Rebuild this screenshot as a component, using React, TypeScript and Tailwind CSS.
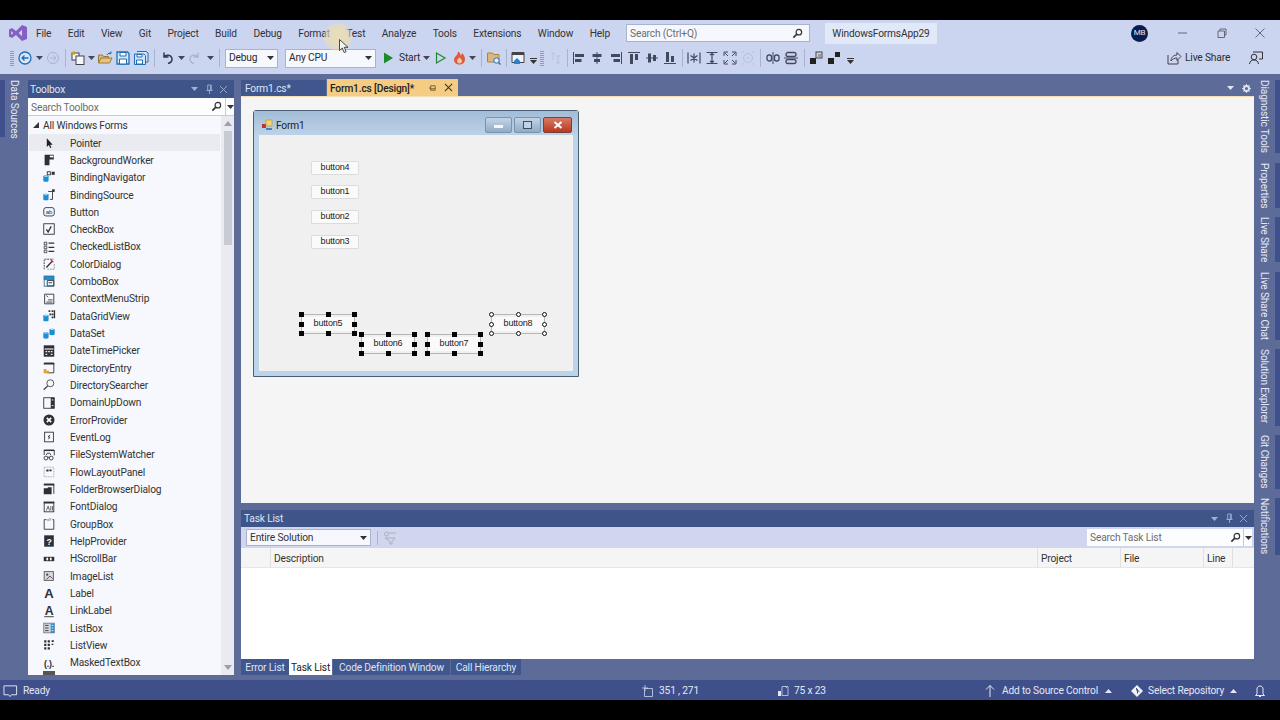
import React from "react";

const D = "#2f2f35";
const B = "#1c8ed6";

function I({ children, c = "w-[16px] h-[16px]" }: { children?: React.ReactNode; c?: string }) {
  return (
    <svg viewBox="0 0 16 16" className={c + " shrink-0"} fill="none">
      {children}
    </svg>
  );
}

const Cyl = ({ x = 2, y = 7 }: { x?: number; y?: number }) => (
  <g>
    <path d={`M${x} ${y}c0-1.3 6-1.3 6 0v5.5c0 1.3-6 1.3-6 0z`} fill={B} />
    <ellipse cx={x + 3} cy={y} rx="2.2" ry=".7" fill="#bfe3f8" />
  </g>
);

const toolboxIcons: Record<string, React.ReactNode> = {
  Pointer: <path d="M5.5 2.5v10l2.3-2.1 1.5 3.4 1.4-.6-1.5-3.3h3z" fill="#1f1f24" />,
  BackgroundWorker: (
    <g>
      <path d="M3 2h10.500v5.500H8.500v6.500H3z" fill={D} />
      <rect x="9" y="3" width="4" height="2" fill="#fff" />
    </g>
  ),
  BindingNavigator: (
    <g>
      <Cyl x={1.500} y={7} />
      <rect x="6" y="2" width="3.500" height="3.500" stroke={D} />
      <rect x="11" y="2" width="3.500" height="3.500" fill={D} />
    </g>
  ),
  BindingSource: (
    <g>
      <Cyl x={1.500} y={7.500} />
      <path d="M7 4h5v9H9" stroke={D} />
      <rect x="11.500" y="1.500" width="3" height="3" fill={D} />
    </g>
  ),
  Button: (
    <g>
      <rect x="2" y="3" width="12" height="9.500" rx="2.500" stroke={D} />
      <text x="8" y="10.500" textAnchor="middle" fontSize="7" fill={D} fontFamily="Liberation Sans">ab</text>
    </g>
  ),
  CheckBox: (
    <g>
      <rect x="2" y="2" width="12" height="12" stroke={D} />
      <path d="M5 8.500l2 3 3.500-6.500" stroke={D} strokeWidth="1.500" />
    </g>
  ),
  CheckedListBox: (
    <g>
      <path d="M2.500 2.500h3v3h-3zM2.500 7h3v3h-3zM2.500 11.500h3v3h-3z" stroke={D} strokeWidth=".9" />
      <path d="M7.500 3.500h6.500M7.500 8.500h6.500M7.500 13h6.500" stroke={D} strokeWidth="1.400" />
    </g>
  ),
  ColorDialog: (
    <g>
      <path d="M2.500 14V2.500H13" stroke={D} strokeDasharray="2 1" />
      <path d="M5 12l6.500-7" stroke={D} strokeWidth="1.600" />
      <path d="M10 3l3 3" stroke="#c33" strokeWidth="1.500" />
      <path d="M6 14h8V8" stroke="#888" strokeDasharray="2 1" />
    </g>
  ),
  ComboBox: (
    <g>
      <rect x="2" y="2" width="12" height="5" fill={B} />
      <rect x="2.500" y="2.500" width="11" height="11.500" stroke="#3f6f8f" />
      <path d="M6 7.500v6h7.500V7.500zM7.500 10h4" stroke={D} />
    </g>
  ),
  ContextMenuStrip: (
    <g>
      <path d="M3 2.500h10.500v11H3z" stroke={D} />
      <path d="M5 4l2 2M7 9h5M5 11.500h7" stroke={D} />
    </g>
  ),
  DataGridView: (
    <g>
      <Cyl x={1.500} y={7.500} />
      <path d="M7.500 1.500h2v2h-2zM11 1.500h2v2h-2zM11 5h2v2h-2zM8.500 5h2v2h-2zM11 8.500h2v2h-2zM13.500 1.500h1.500v9h-1.500z" fill={D} />
    </g>
  ),
  DataSet: (
    <g>
      <Cyl x={1.500} y={8} />
      <Cyl x={8.500} y={4} />
    </g>
  ),
  DateTimePicker: (
    <g>
      <rect x="2" y="1.500" width="12" height="13" fill={D} />
      <rect x="3" y="5" width="10" height="1.500" fill="#ddd" />
      <path d="M4 8h2v1.500H4zM7 8h2v1.500H7zM10 8h2v1.500h-2zM4 11h2v1.500H4zM10 11h2v1.500h-2z" fill="#eee" />
    </g>
  ),
  DirectoryEntry: (
    <g>
      <path d="M2.500 2.500h11v11H6" stroke={D} />
      <rect x="2" y="2" width="12" height="2" fill={D} />
      <path d="M2 9h3v2h3v3H2z" fill="#e0a030" />
    </g>
  ),
  DirectorySearcher: (
    <g>
      <circle cx="9.500" cy="6" r="4" stroke="#444" />
      <path d="M6.500 9l-4.500 4.500" stroke="#444" strokeWidth="1.500" />
    </g>
  ),
  DomainUpDown: (
    <g>
      <rect x="2" y="2" width="12" height="12" stroke={D} />
      <path d="M10 2h4v12h-4z" fill={D} />
      <path d="M11 4.500h2M11 11h2" stroke="#fff" />
    </g>
  ),
  ErrorProvider: (
    <g>
      <circle cx="8" cy="8" r="6.300" fill={D} />
      <path d="M5.500 5.500l5 5M10.500 5.500l-5 5" stroke="#fff" strokeWidth="1.900" />
    </g>
  ),
  EventLog: (
    <g>
      <rect x="3" y="2.500" width="10" height="11" stroke={D} />
      <path d="M9 5.500L7 8h2l-1.500 2.500" stroke={D} />
    </g>
  ),
  FileSystemWatcher: (
    <g>
      <path d="M3 2.500h11v6M2.500 8V3" stroke={D} />
      <rect x="2" y="2" width="12" height="1.500" fill={D} />
      <circle cx="4.500" cy="11.500" r="2.200" stroke={D} />
      <circle cx="10.500" cy="11.500" r="2.200" stroke={D} />
      <path d="M6.500 10.500h2M5 8l1-2h3l1 2" stroke={D} />
    </g>
  ),
  FlowLayoutPanel: (
    <g>
      <rect x="2.500" y="2.500" width="11" height="11" stroke="#aaa" strokeDasharray="2 1" />
      <path d="M5 5h2.500v2.500H5zM8.500 5H11v2H8.500z" fill={D} />
    </g>
  ),
  FolderBrowserDialog: (
    <g>
      <path d="M2.500 2.500h11v11" stroke={D} />
      <rect x="2" y="2" width="12" height="2" fill={D} />
      <path d="M2 7h4l1-1h4v8H2z" fill={D} />
    </g>
  ),
  FontDialog: (
    <g>
      <rect x="2.500" y="2.500" width="11" height="11" stroke={D} />
      <rect x="2" y="2" width="12" height="2" fill={D} />
      <path d="M5 12l2-5 1.500 5M10 7v5M12 7v5" stroke="#555" />
    </g>
  ),
  GroupBox: (
    <g>
      <path d="M5 3H2.500v11h11V3H12" stroke={D} />
      <text x="8.200" y="5" textAnchor="middle" fontSize="4.500" fill={D} fontFamily="Liberation Sans">xY</text>
    </g>
  ),
  HelpProvider: (
    <g>
      <rect x="2.500" y="1.500" width="11" height="13" fill={D} />
      <text x="8" y="12" textAnchor="middle" fontSize="10" fontWeight="bold" fill="#fff" fontFamily="Liberation Sans">?</text>
    </g>
  ),
  HScrollBar: (
    <g>
      <rect x="2" y="5.500" width="12" height="5" fill={D} />
      <rect x="5" y="6.500" width="2" height="3" fill="#fff" />
      <rect x="9" y="6.500" width="2" height="3" fill="#fff" />
    </g>
  ),
  ImageList: (
    <g>
      <rect x="2.500" y="3" width="10.500" height="10" fill="#d9d9d9" stroke="#555" />
      <circle cx="6" cy="6.500" r="1.300" fill="#444" />
      <path d="M5 12l4-4 3 3" stroke="#444" />
    </g>
  ),
  Label: <text x="8" y="14" textAnchor="middle" fontSize="15" fontWeight="bold" fill={D} fontFamily="Liberation Sans">A</text>,
  LinkLabel: (
    <g>
      <text x="8" y="13" textAnchor="middle" fontSize="14" fontWeight="bold" fill={D} fontFamily="Liberation Sans">A</text>
      <path d="M2.500 14.500h11" stroke={D} />
    </g>
  ),
  ListBox: (
    <g>
      <rect x="2" y="2.500" width="12" height="11" fill="#cfd6dc" stroke="#778" />
      <path d="M3.500 5h4M3.500 8h4M3.500 11h4" stroke={D} />
      <rect x="10" y="3" width="4" height="10.500" fill={B} />
      <path d="M11 5h2M11 8h2M11 11h2" stroke="#fff" />
    </g>
  ),
  ListView: <path d="M2.500 2.500h2.500v2.500H2.500zM6.500 2.500H9v2.500H6.500zM11 2.500h2.500v2H11zM2.500 6.500h2.500v2.500H2.500zM6.500 6.500H9v2.500H6.500zM11 6.500h2v1.500h-2zM2.500 10.500h2.500v2.500H2.500zM6.500 10.500H9v2.500H6.500z" fill={D} />,
  MaskedTextBox: <text x="8" y="12" textAnchor="middle" fontSize="10" fontWeight="bold" fill={D} fontFamily="Liberation Sans">(.).</text>,
};

const tools = Object.keys(toolboxIcons);

function Caret({ c = "#333" }: { c?: string }) {
  return (
    <svg viewBox="0 0 7 4" className="w-[7px] h-[4px] shrink-0">
      <path d="M0 0h7L3.500 4z" fill={c} />
    </svg>
  );
}

function Box({ w, children }: { w: string; children?: React.ReactNode }) {
  return <div className={w + " h-[20px] flex items-center justify-center shrink-0"}>{children}</div>;
}

const Icon18 = ({ children }: { children: React.ReactNode }) => (
  <Box w="w-[18px]">
    <I>{children}</I>
  </Box>
);

const Dd = ({ w = "w-[10px]" }: { w?: string }) => (
  <Box w={w}>
    <Caret c="#44475a" />
  </Box>
);

const Sep = ({ w = "w-[6px]" }: { w?: string }) => (
  <Box w={w}>
    <div className="w-px h-[18px] bg-[#a9b3cf]" />
  </Box>
);

const Grip = () => (
  <Box w="w-[6px]">
    <div className="w-[4px] h-[16px] bg-[repeating-linear-gradient(0deg,#8f9ab8_0,#8f9ab8_1px,transparent_1px,transparent_2px)]" />
  </Box>
);

function Combo({ w, label }: { w: string; label: string }) {
  return (
    <div className={w + " h-[19px] bg-[#f6f8fd] border border-[#a9b3cf] flex items-center justify-between pl-[3px] pr-[3px] shrink-0 text-[10.2px] text-[#2a2a2a]"}>
      <span>{label}</span>
      <Caret c="#333" />
    </div>
  );
}

const alignStroke = "#44485c";

function Toolbar() {
  return (
    <div className="h-[28px] pb-[4px] flex items-center">
      <div className="w-[9px] shrink-0" />
      <Grip />
      <div className="w-px shrink-0" />
      <Icon18>
        <circle cx="8" cy="8" r="6" fill="#d9e6f8" stroke="#1f6fb8" strokeWidth="1.300" />
        <path d="M11.500 8H5M7.500 5.500L5 8l2.500 2.500" stroke="#1f6fb8" strokeWidth="1.300" />
      </Icon18>
      <Dd />
      <Icon18>
        <circle cx="8" cy="8" r="5.500" stroke="#a9b3cf" />
        <path d="M5 8h6M8.500 5.500L11 8l-2.500 2.500" stroke="#a9b3cf" />
      </Icon18>
      <Sep />
      <div className="w-px shrink-0" />
      <Icon18>
        <rect x="2" y="3" width="7" height="7" fill="#f4f6fb" stroke="#444" />
        <rect x="6" y="6" width="8" height="8.500" fill="#f4f6fb" stroke="#444" />
        <path d="M4 1v4M2 3h4" stroke="#d9a000" strokeWidth="1.300" />
      </Icon18>
      <Dd w="w-[9px]" />
      <Icon18>
        <path d="M1.500 13V5h4l1 1.500h5v2" fill="#dcb67a" stroke="#9a7b3c" />
        <path d="M1.500 13l2.500-5h11l-2.500 5z" fill="#e8c27e" stroke="#9a7b3c" />
        <path d="M10 5c1-2 3-2.500 4-1.500M14 1.500v2.200h-2.200" stroke="#1f6fb8" />
      </Icon18>
      <Icon18>
        <path d="M2 2h10.500L14 3.500V14H2z" fill="#d5e5f7" stroke="#1f6fb8" strokeWidth="1.300" />
        <path d="M5 2.500h6v3.500H5zM4.500 9h7v5h-7z" fill="#fff" stroke="#1f6fb8" />
      </Icon18>
      <Icon18>
        <path d="M4 1.500h9L15 3v9h-2M1.500 4h9.500L12.500 5.500v9h-11z" fill="#d5e5f7" stroke="#1f6fb8" />
        <path d="M4 4.500h5v2.500H4zM3.500 10h6v4h-6z" fill="#fff" stroke="#1f6fb8" />
      </Icon18>
      <Sep w="w-[8px]" />
      <Icon18>
        <path d="M5 2.500v4.500h4.500M5 7c1.500-2.500 7.500-3 8 2 .2 2.500-2 4-4 4.500" stroke="#33384a" strokeWidth="1.500" />
      </Icon18>
      <Dd />
      <Icon18>
        <path d="M11 2.500v4.500H6.500M11 7C9.500 4.500 3.500 4 3 9c-.2 2.500 2 4 4 4.500" stroke="#aab3cc" strokeWidth="1.300" />
      </Icon18>
      <Dd w="w-[13px]" />
      <Sep w="w-[5px]" />
      <div className="w-[3px] shrink-0" />
      <Combo w="w-[53px]" label="Debug" />
      <div className="w-[7px] shrink-0" />
      <Combo w="w-[91px]" label="Any CPU" />
      <div className="w-[3px] shrink-0" />
      <Icon18>
        <path d="M4 2.500l9 5.500-9 5.500z" fill="#1f8a2c" />
      </Icon18>
      <div className="w-[2px] shrink-0" />
      <span className="w-[22px] shrink-0 text-[10.2px] text-[#2a2a2a]">Start</span>
      <Dd />
      <Icon18>
        <path d="M4.500 3l8.500 5-8.500 5z" stroke="#1f8a2c" strokeWidth="1.200" />
      </Icon18>
      <div className="w-px shrink-0" />
      <Icon18>
        <path d="M3 10c0-4 4-4 4-8.500 2 1 2.500 2.500 2.500 4 1-.5 1.500-1.500 1.500-2.500 2 2 3 4 3 6.500 0 3-2.500 5-5.500 5S3 12.500 3 10z" fill="#e05a3a" />
        <path d="M6 10.500c0-1.500 3-3 3-3 .5 1.500 2 2 2 3.500s-1 2.500-2.500 2.500S6 12 6 10.500z" fill="#f7c3a8" />
      </Icon18>
      <Dd w="w-[9px]" />
      <Sep w="w-[8px]" />
      <Icon18>
        <path d="M1.500 3h5l1 1.500h5.500V12H1.500z" fill="#dcb67a" stroke="#a98640" />
        <circle cx="10.500" cy="10.500" r="2.700" fill="#e4eefb" stroke="#1f6fb8" />
        <path d="M12.500 12.500l2 2" stroke="#1f6fb8" strokeWidth="1.300" />
      </Icon18>
      <Sep />
      <Icon18>
        <path d="M2 2.500h12v10H2z" stroke="#444" fill="#eef2fb" />
        <rect x="2" y="2.500" width="12" height="2.500" fill="#444" />
        <path d="M4 11l3-3 3 3v3H4z" fill="#2a7fd0" />
      </Icon18>
      <div className="w-px shrink-0" />
      <Box w="w-[10px]">
        <div className="w-[7px] flex flex-col items-center gap-px mt-[6px]">
          <div className="w-[7px] h-px bg-[#333]" />
          <Caret />
        </div>
      </Box>
      <div className="w-px shrink-0" />
      <Grip />
      <div className="w-px shrink-0" />
      <Icon18>
        <path d="M4 3h4M6 3v7M11 6v7M9 13h4" stroke="#b9c0d6" />
        <path d="M9 6h4" stroke="#b9c0d6" />
      </Icon18>
      <Sep />
      <Icon18>
        <path d="M2.500 2v12" stroke={alignStroke} />
        <path d="M4 4h9v3H4zM4 9h6.500v3H4z" fill={alignStroke} />
      </Icon18>
      <Icon18>
        <path d="M8 2v12" stroke={alignStroke} />
        <path d="M3.500 4h9v3h-9zM5 9h6v3H5z" fill={alignStroke} />
      </Icon18>
      <div className="w-px shrink-0" />
      <Icon18>
        <path d="M13.500 2v12" stroke={alignStroke} />
        <path d="M3 4h9v3H3zM5.500 9H12v3H5.500z" fill={alignStroke} />
      </Icon18>
      <Icon18>
        <path d="M2 2.500h12" stroke={alignStroke} />
        <path d="M4 4h3v10H4zM9 4h3v6H9z" fill={alignStroke} />
      </Icon18>
      <Icon18>
        <path d="M2 8h12" stroke={alignStroke} />
        <path d="M4 3.500h3v9H4zM9 5h3v6H9z" fill={alignStroke} />
      </Icon18>
      <Icon18>
        <path d="M2 13.500h12" stroke={alignStroke} />
        <path d="M4 2h3v10H4zM9 6h3v6H9z" fill={alignStroke} />
      </Icon18>
      <Sep />
      <Icon18>
        <path d="M2 2.500v11M14 2.500v11M8 3.500v9M4.500 5.500l7 5M11.500 5.500l-7 5" stroke={alignStroke} strokeWidth="1.200" />
      </Icon18>
      <Icon18>
        <path d="M2.500 2.500h11M2.500 13.500h11M8 4v8M6 5l2-1.500L10 5M6 11l2 1.500 2-1.500" stroke={alignStroke} strokeWidth="1.200" />
      </Icon18>
      <Icon18>
        <path d="M2 6V2h4M10 2h4v4M14 10v4h-4M6 14H2v-4M3 3l3 3M13 3l-3 3M13 13l-3-3M3 13l3-3" stroke={alignStroke} />
      </Icon18>
      <Icon18>
        <circle cx="8" cy="8" r="4.500" stroke="#b9c0d6" />
        <path d="M2 2h2M12 2h2M2 14h2M12 14h2M6.500 8h3" stroke="#b9c0d6" />
      </Icon18>
      <Sep />
      <div className="w-px shrink-0" />
      <Icon18>
        <rect x="2" y="5" width="4.500" height="6" rx="2" stroke={alignStroke} strokeWidth="1.300" />
        <rect x="9.500" y="5" width="4.500" height="6" rx="2" stroke={alignStroke} strokeWidth="1.300" />
        <path d="M8 2v12" stroke={alignStroke} />
      </Icon18>
      <Icon18>
        <rect x="3" y="2.500" width="10" height="4" rx="2" stroke={alignStroke} strokeWidth="1.300" />
        <rect x="3" y="9.500" width="10" height="4" rx="2" stroke={alignStroke} strokeWidth="1.300" />
        <path d="M1 8h14" stroke={alignStroke} />
      </Icon18>
      <div className="w-px shrink-0" />
      <Sep />
      <Icon18>
        <rect x="2" y="8" width="6" height="6" fill="#222" />
        <rect x="8" y="2" width="6" height="6" fill="none" stroke="#444" />
        <rect x="10" y="4" width="3" height="3" fill="#999" />
      </Icon18>
      <Icon18>
        <rect x="2" y="8" width="6" height="6" fill="#222" />
        <rect x="9" y="2" width="5" height="5" fill="#222" />
      </Icon18>
      <div className="w-[2px] shrink-0" />
      <Box w="w-[10px]">
        <div className="w-[7px] flex flex-col items-center gap-px mt-[6px]">
          <div className="w-[7px] h-px bg-[#333]" />
          <Caret />
        </div>
      </Box>
      <div className="ml-auto flex items-center">
        <I>
          <path d="M2 5v9h10V10" stroke="#444" />
          <path d="M5 11c0-4 3-6 6-6V2.500l4 4-4 4V8c-2.500 0-4.500 1-6 3z" stroke="#444" />
        </I>
        <span className="ml-[3px] w-[46px] whitespace-nowrap text-[10.2px] text-[#2a2a2a]">Live Share</span>
        <div className="w-[17px]" />
        <I>
          <circle cx="6" cy="7" r="2.800" stroke="#333" />
          <path d="M1.500 14c.5-3 2-4 4.500-4s4 1 4.500 4" stroke="#333" />
          <path d="M5 2h9.500v7H11" stroke="#333" />
        </I>
        <div className="w-[16px]" />
      </div>
    </div>
  );
}

const menus = ["File", "Edit", "View", "Git", "Project", "Build", "Debug", "Format", "Test", "Analyze", "Tools", "Extensions", "Window", "Help"];

function MenuBar() {
  return (
    <div className="h-[26px] flex items-center">
      <div className="w-[9px] shrink-0" />
      <svg viewBox="0 0 18 16" className="w-[18px] h-[16px] shrink-0">
        <path fillRule="evenodd" d="M13 0l5 2v12l-5 2-6-6-4 3-3-1.500v-7L3 3l4 3zM13 4.800L9.700 8l3.300 3.200zM2.200 6v4L4.300 8z" fill="#865fc5" />
      </svg>
      <div className="w-[9px] shrink-0" />
      <div className="w-[574px] shrink-0 pt-[2px] flex justify-between text-[10.2px] text-[#333]">
        {menus.map((m) => (
          <span key={m}>{m}</span>
        ))}
      </div>
      <div className="w-[16px] shrink-0" />
      <div className="w-[184px] h-[18px] bg-[#f6f8fd] border border-[#a9b3cf] flex items-center justify-between pl-[3px] pr-[6px] pt-px text-[10.2px] text-[#6d6d6d] shrink-0">
        <span>Search (Ctrl+Q)</span>
        <Mag />
      </div>
      <div className="w-[15px] shrink-0" />
      <div className="w-[112px] h-[21px] bg-[#e1e8f8] flex items-center justify-center whitespace-nowrap pt-px text-[10.2px] text-[#333] shrink-0">WindowsFormsApp29</div>
      <div className="ml-auto flex items-center">
        <div className="w-[17px] h-[17px] rounded-full bg-[#0a1d4f] text-[#dfe6f7] text-[8px] flex items-center justify-center">MB</div>
        <div className="w-[29px]" />
        <svg viewBox="0 0 12 12" className="w-[12px] h-[12px]"><path d="M1 6h9" stroke="#667" /></svg>
        <div className="w-[27px]" />
        <svg viewBox="0 0 12 12" className="w-[12px] h-[12px]"><path d="M2 4h6.500v6.500H2zM4 4V2h6v6H8.500" stroke="#667" fill="none" /></svg>
        <div className="w-[26px]" />
        <svg viewBox="0 0 12 12" className="w-[12px] h-[12px]"><path d="M1.500 1.500l9 9M10.500 1.500l-9 9" stroke="#667" /></svg>
        <div className="w-[14px]" />
      </div>
    </div>
  );
}

function Mag({ c = "#333" }: { c?: string }) {
  return (
    <svg viewBox="0 0 12 12" className="w-[11px] h-[11px] shrink-0">
      <circle cx="7.500" cy="4.500" r="3" fill="none" stroke={c} strokeWidth="1.300" />
      <path d="M5 7l-3.500 3.500" stroke={c} strokeWidth="1.800" />
    </svg>
  );
}

function PanelIcons({ c = "#9fb0d6" }: { c?: string }) {
  return (
    <div className="flex items-center">
      <Caret c={c} />
      <div className="w-[7px]" />
      <svg viewBox="0 0 10 12" className="w-[9px] h-[11px]">
        <path d="M3 1h4v6H3zM1.500 7h7M5 7v4M6 1.500v5" stroke={c} fill="none" />
      </svg>
      <div className="w-[5px]" />
      <svg viewBox="0 0 10 10" className="w-[9px] h-[9px]">
        <path d="M1 1l8 8M9 1l-8 8" stroke={c} />
      </svg>
    </div>
  );
}

function Toolbox() {
  return (
    <div className="w-[206px] h-[595px] flex flex-col shrink-0 bg-[#f6f8fd]">
      <div className="h-[18px] bg-[#3f5488] flex items-center justify-between pl-[2px] pr-[6px] text-[10.2px] text-[#dfe5f5] shrink-0">
        <span className="pt-[2px]">Toolbox</span>
        <PanelIcons />
      </div>
      <div className="h-[18px] flex bg-[#fcfdff] border-b border-[#c4cbe0] shrink-0">
        <div className="flex-1 flex items-center justify-between pl-[3px] pr-[3px] text-[10.2px] text-[#6d6d6d]">
          <span className="pt-[2px]">Search Toolbox</span>
          <Mag />
        </div>
        <div className="w-[9px] border-l border-[#c4cbe0] flex items-center justify-center">
          <Caret />
        </div>
      </div>
      <div className="flex-1 flex min-h-0 overflow-hidden">
        <div className="w-[193px] shrink-0 overflow-hidden">
          <div className="h-[18px] flex items-center text-[10.2px] text-[#333]">
            <svg viewBox="0 0 6 6" className="w-[6px] h-[6px] ml-[5px]"><path d="M6 0v6H0z" fill="#333" /></svg>
            <span className="ml-[4px] pt-[2px]">All Windows Forms</span>
          </div>
          {tools.map((t) => (
            <div key={t} className={"h-[17.33px] flex items-center text-[10.2px] text-[#333] ml-[1px] mr-[1px] " + (t === "Pointer" ? "bg-[#e9ebf1]" : "")}>
              <div className="w-[13px] shrink-0" />
              <I c="w-[14px] h-[14px]">{toolboxIcons[t]}</I>
              <span className="ml-[14px] pt-px">{t}</span>
            </div>
          ))}
          <div className="h-[17px] flex items-start">
            <div className="ml-[15px] w-[12px] h-[4px] bg-[#555]" />
          </div>
        </div>
        <div className="w-[13px] shrink-0 bg-[#e9ebf0] flex flex-col items-center pt-[5px] pb-[5px]">
          <svg viewBox="0 0 8 5" className="w-[8px] h-[5px] shrink-0"><path d="M0 5h8L4 0z" fill="#9b9fae" /></svg>
          <div className="w-[8px] h-[114px] mt-[5px] bg-[#c8cbd4]" />
          <div className="flex-1" />
          <svg viewBox="0 0 8 5" className="w-[8px] h-[5px] shrink-0"><path d="M0 0h8L4 5z" fill="#9b9fae" /></svg>
        </div>
      </div>
    </div>
  );
}

function Btn({ x, y, label }: { x: string; y: string; label: string }) {
  return (
    <div className={"absolute " + x + " " + y + " w-[48px] h-[14px] bg-[#fafafa] border border-[#dcdcdc] rounded-[1px] flex items-center justify-center text-[9px] text-[#222] font-['Liberation_Sans',sans-serif]"}>
      {label}
    </div>
  );
}

function SelBtn({ x, y, label, hollow = false }: { x: string; y: string; label: string; hollow?: boolean }) {
  const pts: [string, string][] = [
    ["left-0", "top-0"],
    ["left-[26.500px]", "top-0"],
    ["left-[53px]", "top-0"],
    ["left-0", "top-[9.500px]"],
    ["left-[53px]", "top-[9.500px]"],
    ["left-0", "top-[19px]"],
    ["left-[26.500px]", "top-[19px]"],
    ["left-[53px]", "top-[19px]"],
  ];
  return (
    <div className={"absolute " + x + " " + y + " w-[58px] h-[24px]"}>
      <div className="absolute left-[2px] top-[2px] w-[54px] h-[20px] border border-[#b5b5b5]" />
      <div className="absolute left-[3px] top-[5px] w-[52px] h-[14px] bg-[#fafafa] flex items-center justify-center text-[9px] text-[#222] font-['Liberation_Sans',sans-serif]">{label}</div>
      {pts.map(([l, t], i) => (
        <div key={i} className={"absolute w-[5px] h-[5px] " + l + " " + t + " " + (hollow ? "bg-white border border-[#111] rounded-full" : "bg-[#050505]")} />
      ))}
    </div>
  );
}

function FormWindow() {
  return (
    <div className="w-[326px] h-[267px] ml-[12px] mt-[13px] bg-[#bcd3e9] border border-[#48606f] rounded-t-[3px] flex flex-col shrink-0">
      <div className="h-[24px] shrink-0 flex items-center bg-[linear-gradient(180deg,#a3bcd6,#bcd2e8)] pl-[7px] pr-[6px] pt-[3px]">
        <svg viewBox="0 0 12 12" className="w-[12px] h-[12px]">
          <rect x="1" y="5" width="4" height="4" fill="#b6343a" />
          <rect x="5" y="1" width="6" height="6" fill="#f4d56a" stroke="#b9922e" strokeWidth=".6" />
          <rect x="5" y="9" width="6" height="2" fill="#4a7fc0" />
        </svg>
        <span className="ml-[3px] pt-[2px] text-[10.2px] text-[#222]">Form1</span>
        <div className="ml-auto flex gap-[2px]">
          <div className="w-[27px] h-[16px] border border-[#7a93ad] rounded-[2px] bg-[linear-gradient(180deg,#c4d4e6,#92abc6)] flex items-center justify-center">
            <div className="w-[9px] h-[3px] bg-[#f4f6f8] mt-[3px]" />
          </div>
          <div className="w-[27px] h-[16px] border border-[#7a93ad] rounded-[2px] bg-[linear-gradient(180deg,#c4d4e6,#92abc6)] flex items-center justify-center">
            <div className="w-[9px] h-[8px] border border-[#3d4e63] bg-[#c0d2e5]" />
          </div>
          <div className="w-[29px] h-[16px] border border-[#7a4035] rounded-[2px] bg-[linear-gradient(180deg,#d77b66,#b8381f)] flex items-center justify-center">
            <svg viewBox="0 0 10 8" className="w-[10px] h-[8px]"><path d="M1.500 1l7 6M8.500 1l-7 6" stroke="#fff" strokeWidth="2" /></svg>
          </div>
        </div>
      </div>
      <div className="flex-1 mx-[5px] mb-[5px] bg-[#f0f0f0] relative">
        <Btn x="left-[52px]" y="top-[26px]" label="button4" />
        <Btn x="left-[52px]" y="top-[50px]" label="button1" />
        <Btn x="left-[52px]" y="top-[75px]" label="button2" />
        <Btn x="left-[52px]" y="top-[100px]" label="button3" />
        <SelBtn x="left-[40px]" y="top-[177px]" label="button5" />
        <SelBtn x="left-[100px]" y="top-[197px]" label="button6" />
        <SelBtn x="left-[166px]" y="top-[197px]" label="button7" />
        <SelBtn x="left-[230px]" y="top-[177px]" label="button8" hollow />
      </div>
    </div>
  );
}

function Doc() {
  return (
    <div className="h-[423px] flex flex-col shrink-0">
      <div className="h-[16px] flex items-stretch shrink-0 text-[10.2px] whitespace-nowrap">
        <div className="w-[85px] bg-[#40568d] text-[#dfe5f5] pl-[4px] pt-[2px] flex items-center">Form1.cs*</div>
        <div className="w-[131px] ml-px -mt-px h-[17px] bg-[#f5cc84] text-[#222] pl-[3px] pr-[5px] flex items-center justify-between font-medium">
          <span className="pt-[2px]">Form1.cs [Design]*</span>
          <span className="flex items-center gap-[7px]">
            <svg viewBox="0 0 10 8" className="w-[9px] h-[8px]"><path d="M1 4h2M3 1.500h5v5H3zM3 4.800h5" stroke="#6c5a30" fill="none" /></svg>
            <svg viewBox="0 0 10 10" className="w-[9px] h-[9px]"><path d="M1 1l8 8M9 1l-8 8" stroke="#40351c" strokeWidth="1.200" /></svg>
          </span>
        </div>
        <div className="ml-auto flex items-center pr-[3px]">
          <Caret c="#e1e6f5" />
          <div className="w-[8px]" />
          <svg viewBox="0 0 10 10" className="w-[9px] h-[9px]">
            <circle cx="5" cy="5" r="2.800" fill="none" stroke="#e1e6f5" strokeWidth="2" />
            <path d="M5 0v2M5 8v2M0 5h2M8 5h2M1.500 1.500l1.200 1.200M7.300 7.300l1.200 1.200M8.500 1.500L7.300 2.700M2.700 7.300L1.500 8.500" stroke="#e1e6f5" />
          </svg>
        </div>
      </div>
      <div className="flex-1 bg-[#f5f5f5] border-t border-[#f4dcb4] min-h-0">
        <FormWindow />
      </div>
    </div>
  );
}

function TaskList() {
  const cols: [string, string][] = [
    ["w-[30px]", ""],
    ["w-[767px]", "Description"],
    ["w-[83px]", "Project"],
    ["w-[83px]", "File"],
    ["w-[29px]", "Line"],
  ];
  return (
    <div className="h-[165px] flex flex-col shrink-0 mt-[7px]">
      <div className="h-[17px] bg-[#3f5488] flex items-center justify-between pl-[3px] pr-[6px] text-[10.2px] text-[#dfe5f5] shrink-0">
        <span>Task List</span>
        <PanelIcons />
      </div>
      <div className="h-[21px] bg-[#cfd6ee] flex items-center pl-[5px] pr-[2px] shrink-0">
        <div className="w-[125px] h-[17px] bg-[#f6f8fd] border border-[#a9b3cf] flex items-center justify-between pl-[3px] pr-[3px] text-[10.2px] text-[#333]">
          <span>Entire Solution</span>
          <Caret />
        </div>
        <div className="w-px h-[14px] ml-[6px] bg-[#a9b3cf]" />
        <svg viewBox="0 0 14 14" className="w-[14px] h-[14px] ml-[5px]">
          <circle cx="3.500" cy="3" r="2" fill="none" stroke="#a9b0bf" />
          <path d="M2 7h10L9 10.500V13H7v-2.500z" fill="none" stroke="#a9b0bf" />
          <path d="M6 2h7" stroke="#a9b0bf" />
        </svg>
        <div className="ml-auto w-[165px] h-[17px] bg-[#fcfdff] flex">
          <div className="flex-1 flex items-center justify-between pl-[3px] pr-[2px] text-[10.2px] text-[#6d6d6d]">
            <span>Search Task List</span>
            <Mag />
          </div>
          <div className="w-[9px] border-l border-[#c4cbe0] flex items-center justify-center">
            <Caret />
          </div>
        </div>
      </div>
      <div className="h-[20px] bg-[#f5f5f5] flex border-b border-[#e6e6e6] text-[10.2px] text-[#333] shrink-0">
        {cols.map(([w, l], i) => (
          <div key={i} className={w + " shrink-0 border-r border-[#e0e0e0] pl-[3px] pt-[2px] flex items-center"}>
            {l}
          </div>
        ))}
      </div>
      <div className="flex-1 bg-white min-h-0" />
      <div className="h-[16px] flex bg-[#5d6b99] text-[10.2px] whitespace-nowrap shrink-0">
        <div className="w-[48px] bg-[#40568d] text-[#dfe5f5] pt-[2px] flex items-center justify-center">Error List</div>
        <div className="w-[43px] bg-white text-[#222] pt-[2px] flex items-center justify-center">Task List</div>
        <div className="w-[119px] bg-[#40568d] text-[#dfe5f5] pt-[2px] flex items-center justify-center border-x border-[#5d6b99]">Code Definition Window</div>
        <div className="w-[70px] bg-[#40568d] text-[#dfe5f5] pt-[2px] flex items-center justify-center">Call Hierarchy</div>
      </div>
    </div>
  );
}

function RailTab({ h, label, side, gap }: { h: string; label: string; side: "l" | "r"; gap: string }) {
  const strip = <div className="w-[5px] bg-[#40508d] shrink-0" />;
  return (
    <div className={h + " " + gap + " flex shrink-0"}>
      {side === "l" && strip}
      <div className={"flex-1 flex justify-center " + (side === "l" ? "pr-[5px]" : "pr-px")}>
        <span className="[writing-mode:vertical-rl] whitespace-nowrap text-[10.2px] text-[#e4e8f6] leading-none">{label}</span>
      </div>
      {side === "r" && strip}
    </div>
  );
}

function Status() {
  return (
    <div className="h-[20px] pt-px bg-[#3f4f8a] flex items-center text-[10.2px] text-[#e4e8f6] whitespace-nowrap shrink-0">
      <svg viewBox="0 0 16 14" className="w-[15px] h-[14px] ml-[3px] shrink-0">
        <path d="M1 1.500h13.500v9.500H9l-1.500 2L6 11H1z" fill="none" stroke="#e4e8f6" />
      </svg>
      <span className="ml-[5px] w-[619px] shrink-0">Ready</span>
      <svg viewBox="0 0 12 12" className="w-[12px] h-[12px] shrink-0">
        <path d="M2.500 3.500h8v8h-8zM3 0v6M0 3h6" stroke="#cdd5ee" fill="none" strokeWidth=".8" />
      </svg>
      <span className="ml-[5px] w-[118px] shrink-0">351 , 271</span>
      <svg viewBox="0 0 12 12" className="w-[12px] h-[12px] shrink-0">
        <path d="M5 1.500h6v9H5zM8 1l2 2" stroke="#cdd5ee" fill="none" strokeWidth=".8" />
        <path d="M1 6h3v5H1z" fill="#e4e8f6" />
      </svg>
      <span className="ml-[5px] w-[190px] shrink-0">75 x 23</span>
      <svg viewBox="0 0 12 14" className="w-[12px] h-[14px] shrink-0">
        <path d="M6 13V1.500M2 5.500l4-4 4 4" stroke="#e4e8f6" fill="none" />
      </svg>
      <span className="ml-[6px] w-[103px] shrink-0">Add to Source Control</span>
      <svg viewBox="0 0 7 4" className="w-[7px] h-[4px] shrink-0"><path d="M0 4h7L3.500 0z" fill="#e4e8f6" /></svg>
      <div className="w-[19px] shrink-0" />
      <svg viewBox="0 0 12 12" className="w-[12px] h-[12px] shrink-0">
        <path d="M6 0l6 6-6 6-6-6z" fill="#f0f2fa" />
        <path d="M5 3l1.500 1.500v4M6.500 5l2 2" stroke="#3f4f8a" />
      </svg>
      <span className="ml-[5px] w-[82px] shrink-0">Select Repository</span>
      <svg viewBox="0 0 7 4" className="w-[7px] h-[4px] shrink-0"><path d="M0 4h7L3.500 0z" fill="#e4e8f6" /></svg>
      <div className="ml-auto mr-[14px]">
        <svg viewBox="0 0 12 14" className="w-[12px] h-[14px]">
          <path d="M3 10V5c0-4 6-4 6 0v5l1.500 1.500h-9zM5 12.500h2" stroke="#e4e8f6" fill="none" />
        </svg>
      </div>
    </div>
  );
}

export default function App() {
  return (
    <div className="w-[1280px] h-[720px] bg-black relative overflow-hidden font-['Roboto',sans-serif] tracking-[-0.01em]">
      <div className="h-[20px]" />
      <div className="h-[680px] flex flex-col">
        <div className="bg-[#ccd5f0] h-[54px] shrink-0">
          <MenuBar />
          <Toolbar />
        </div>
        <div className="flex-1 min-h-0 bg-[#5d6b99] flex pt-[6px]">
          <div className="w-[28px] shrink-0">
            <RailTab h="h-[57px]" label="Data Sources" side="l" gap="" />
          </div>
          <Toolbox />
          <div className="w-[7px] shrink-0" />
          <div className="w-[1013px] shrink-0 flex flex-col">
            <Doc />
            <TaskList />
          </div>
          <div className="flex-1 flex flex-col">
            <RailTab h="h-[73px]" label="Diagnostic Tools" side="r" gap="" />
            <RailTab h="h-[45px]" label="Properties" side="r" gap="mt-[10px]" />
            <RailTab h="h-[45px]" label="Live Share" side="r" gap="mt-[9px]" />
            <RailTab h="h-[68px]" label="Live Share Chat" side="r" gap="mt-[10px]" />
            <RailTab h="h-[77px]" label="Solution Explorer" side="r" gap="mt-[9px]" />
            <RailTab h="h-[54px]" label="Git Changes" side="r" gap="mt-[9px]" />
            <RailTab h="h-[57px]" label="Notifications" side="r" gap="mt-[9px]" />
          </div>
        </div>
        <Status />
      </div>
      <div className="absolute left-[324px] top-[23px] w-[28px] h-[28px] rounded-full bg-[radial-gradient(circle,rgba(240,222,170,0.85)_0%,rgba(240,222,170,0.6)_55%,rgba(240,222,170,0)_100%)]" />
      <svg viewBox="0 0 10 15" className="absolute left-[339px] top-[39px] w-[10px] h-[15px]">
        <path d="M.500.500v11l2.800-2.500 1.800 4.500 2-.8-1.800-4.400H9z" fill="#f4f4f4" stroke="#222" strokeWidth=".8" />
      </svg>
    </div>
  );
}
